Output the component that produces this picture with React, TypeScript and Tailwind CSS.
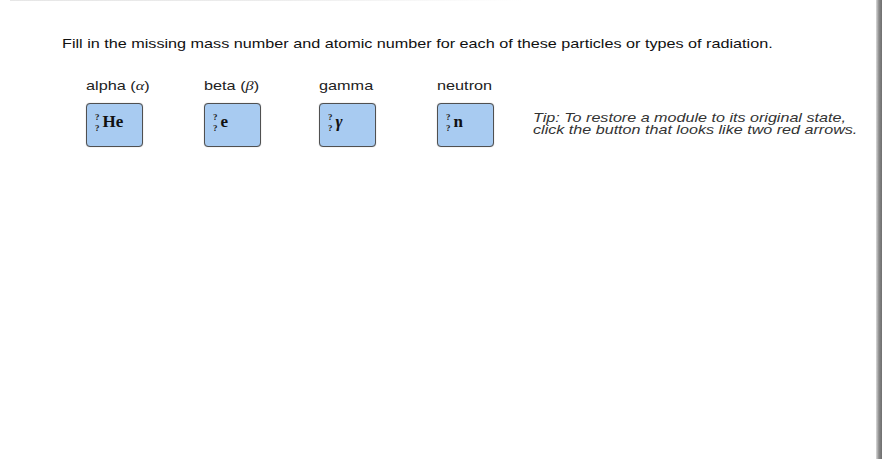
import React from "react";

function Nuclide({ sym, italic }: { sym: string; italic?: boolean }) {
  return (
    <div className="w-[57px] h-[44px] rounded-[4px] border border-[#505050] bg-[#a8cbf1] flex items-start pl-[8px] pt-[8px] shadow-[0_0_1px_rgba(0,0,0,0.4)]">
      <div className="flex flex-col font-bold text-[9px] leading-[11px] text-[#222] font-['Liberation_Serif',serif]">
        <span>?</span>
        <span>?</span>
      </div>
      <span
        className={
          "text-[17px] leading-[20px] font-bold text-[#111] ml-[3px] font-['Liberation_Serif',serif] " +
          (italic ? "italic" : "")
        }
      >
        {sym}
      </span>
    </div>
  );
}

function Column({ label, sym, italic, ml }: { label: React.ReactNode; sym: string; italic?: boolean; ml: string }) {
  return (
    <div className={"flex flex-col " + ml}>
      <div className="h-[15px] text-[13px] leading-[15px] text-[#222] whitespace-nowrap">
        <span className="inline-block origin-left scale-x-[1.25]">{label}</span>
      </div>
      <div className="mt-[10px]">
        <Nuclide sym={sym} italic={italic} />
      </div>
    </div>
  );
}

export default function App() {
  return (
    <div className="w-[882px] h-[459px] bg-white flex font-['Liberation_Sans',Arial,sans-serif] overflow-hidden">
      <div className="flex-1 flex flex-col">
        <div className="h-px w-[512px] ml-[10px] bg-gradient-to-r from-[#e6e6e6] via-[#ececec] to-[#ffffff]" />
        <div className="pl-[62px] pt-[35px] flex flex-col">
          <div className="h-[15px] text-[13px] leading-[15px] text-[#111] whitespace-nowrap">
            <span className="inline-block origin-left scale-x-[1.245]">
              Fill in the missing mass number and atomic number for each of these particles or types of radiation.
            </span>
          </div>
          <div className="flex items-start mt-[27px] ml-[24px]">
            <Column
              ml="ml-0"
              label={
                <>
                  alpha (<span className="italic font-['Liberation_Serif',serif]">α</span>)
                </>
              }
              sym="He"
            />
            <Column
              ml="ml-[61px]"
              label={
                <>
                  beta (<span className="italic font-['Liberation_Serif',serif]">β</span>)
                </>
              }
              sym="e"
            />
            <Column ml="ml-[58px]" label="gamma" sym="γ" italic />
            <Column ml="ml-[61px]" label="neutron" sym="n" />
            <div className="ml-[39px] mt-[34px] text-[13px] leading-[12px] italic text-[#333] whitespace-nowrap">
              <div className="origin-left scale-x-[1.24]">Tip: To restore a module to its original state,</div>
              <div className="origin-left scale-x-[1.24]">click the button that looks like two red arrows.</div>
            </div>
          </div>
        </div>
      </div>
      <div className="w-[6px] h-full bg-gradient-to-r from-[#dcdcdc] via-[#8a8a8a] to-[#6e6e6e]" />
    </div>
  );
}
